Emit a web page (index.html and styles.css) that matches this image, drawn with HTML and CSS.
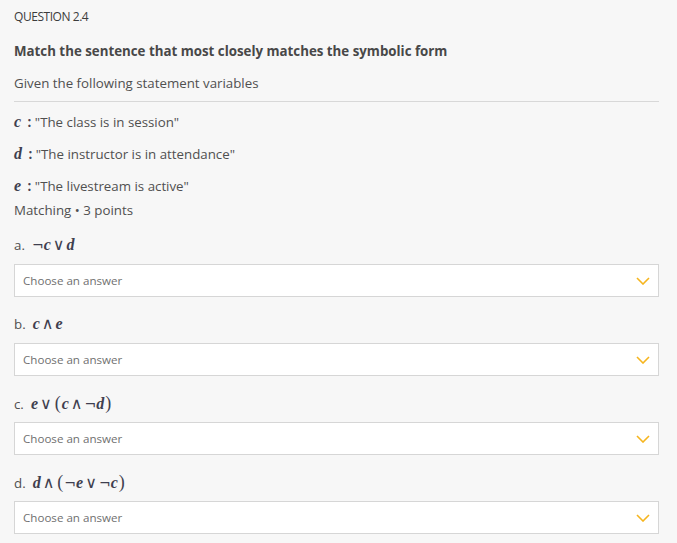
FILE: index.html
```html
<!DOCTYPE html>
<html>
<head>
<meta charset="utf-8">
<link rel="stylesheet" href="styles.css">
</head>
<body>
<div class="page">
  <div class="qnum">QUESTION 2.4</div>
  <div class="title">Match the sentence that most closely matches the symbolic form</div>
  <div class="given">Given the following statement variables</div>
  <hr class="rule">
  <div class="var"><span class="m"><i>c</i></span> <strong>:</strong> "The class is in session"</div>
  <div class="var"><span class="m"><i>d</i></span> <strong>:</strong> "The instructor is in attendance"</div>
  <div class="var"><span class="m"><i>e</i></span> <strong>:</strong> "The livestream is active"</div>
  <div class="meta">Matching • 3 points</div>

  <div class="item">
    <div class="label">a.<span class="m"><b>¬</b><i>c</i><b class="bin">∨</b><i>d</i></span></div>
    <div class="select"><span>Choose an answer</span><svg class="chev" width="14" height="8" viewBox="0 0 14 8"><path d="M1 1 L7 7 L13 1" fill="none" stroke="#f6b51e" stroke-width="1.6"/></svg></div>
  </div>
  <div class="item">
    <div class="label">b.<span class="m"><i>c</i><b class="bin">∧</b><i>e</i></span></div>
    <div class="select"><span>Choose an answer</span><svg class="chev" width="14" height="8" viewBox="0 0 14 8"><path d="M1 1 L7 7 L13 1" fill="none" stroke="#f6b51e" stroke-width="1.6"/></svg></div>
  </div>
  <div class="item">
    <div class="label">c.<span class="m"><i>e</i><b class="bin">∨</b><b class="par">(</b><i>c</i><b class="bin">∧</b><b>¬</b><i>d</i><b class="par">)</b></span></div>
    <div class="select"><span>Choose an answer</span><svg class="chev" width="14" height="8" viewBox="0 0 14 8"><path d="M1 1 L7 7 L13 1" fill="none" stroke="#f6b51e" stroke-width="1.6"/></svg></div>
  </div>
  <div class="item">
    <div class="label">d.<span class="m"><i>d</i><b class="bin">∧</b><b class="par">(</b><b>¬</b><i>e</i><b class="bin">∨</b><b>¬</b><i>c</i><b class="par">)</b></span></div>
    <div class="select"><span>Choose an answer</span><svg class="chev" width="14" height="8" viewBox="0 0 14 8"><path d="M1 1 L7 7 L13 1" fill="none" stroke="#f6b51e" stroke-width="1.6"/></svg></div>
  </div>
</div>
</body>
</html>
```

FILE: styles.css
```css
html, body {
  margin: 0;
  background: #f7f7f7;
}
.page {
  padding: 7px 18px 0 14px;
  font-family: "Open Sans", "Liberation Sans", sans-serif;
  color: #505050;
  font-size: 13.3px;
  display: flex;
  flex-direction: column;
}
.qnum {
  font-size: 12px;
  line-height: 20px;
  letter-spacing: -0.45px;
  color: #3c3c3c;
}
.title {
  margin-top: 14px;
  font-weight: 700;
  line-height: 20px;
  color: #484848;
}
.given {
  margin-top: 12px;
  line-height: 20px;
}
.rule {
  margin: 8px 0 0 0;
  border: 0;
  border-top: 1px solid #d8d8d8;
  height: 0;
}
.var {
  margin-top: 10px;
  line-height: 22px;
}
.var .m { margin-right: 3px; }
.var strong {
  font-weight: 700;
  color: #454555;
}
.rule + .var { margin-top: 9px; }
.meta {
  margin-top: 2px;
  line-height: 22px;
}
.m {
  font-family: "Liberation Serif", "DejaVu Serif", serif;
  font-size: 16px;
  color: #3f3f4f;
}
.m i {
  font-style: italic;
  font-weight: 700;
}
.m b {
  font-weight: 400;
  font-family: "DejaVu Sans", sans-serif;
  font-size: 14px;
}
.m b.bin {
  font-size: 16px;
  margin: 0 2px;
}
.m b.par {
  font-family: "Liberation Serif", serif;
  font-size: 18px;
  margin: 0 1px;
}
.label .m { margin-left: 7px; }
.item {
  display: flex;
  flex-direction: column;
}
.label {
  margin-top: 14px;
  line-height: 20px;
  height: 20px;
}
.select {
  margin-top: 9px;
  height: 31px;
  border: 1px solid #d6d6d6;
  background: #ffffff;
  display: flex;
  align-items: center;
  justify-content: space-between;
  padding: 0 8px 0 8px;
  font-size: 11.6px;
  color: #707070;
}
.item + .item .label { margin-top: 17px; }
```
